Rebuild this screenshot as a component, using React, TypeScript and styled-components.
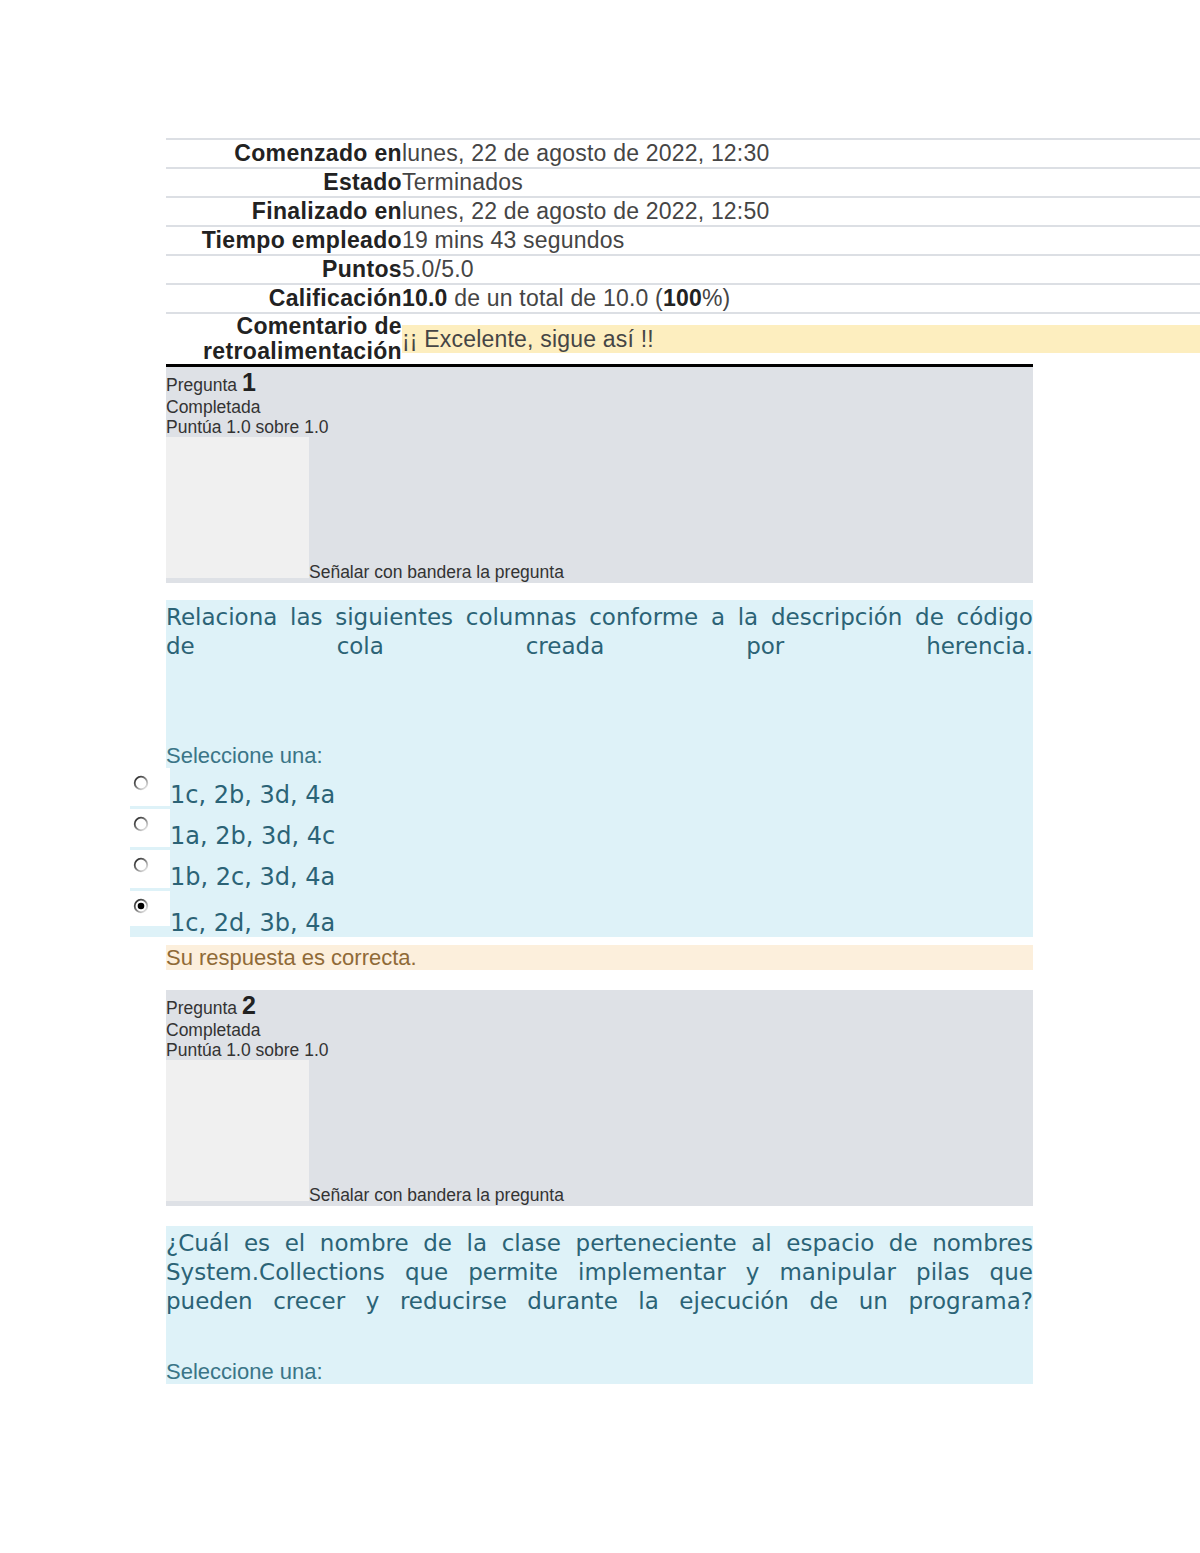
import React from "react";
import styled, { createGlobalStyle } from "styled-components";

const GlobalStyle = createGlobalStyle`
  html, body {
    margin: 0;
    padding: 0;
    background: #fff;
  }
  body {
    font-family: "Liberation Sans", Arial, sans-serif;
  }
`;

const Page = styled.div`
  box-sizing: border-box;
  width: 1200px;
  min-height: 1553px;
  padding: 138px 0 0 166px;
  overflow: hidden;
`;

const Summary = styled.div`
  display: flex;
  flex-direction: column;
`;

const SummaryRow = styled.div`
  display: grid;
  grid-template-columns: 236px 1fr;
  border-top: 2px solid #dcdfe4;
`;

const Label = styled.div<{ $tall?: boolean }>`
  text-align: right;
  font-size: 23px;
  font-weight: 700;
  letter-spacing: 0.35px;
  line-height: ${(p) => (p.$tall ? "25px" : "27px")};
  color: #222;
  white-space: nowrap;
`;

const Value = styled.div`
  font-size: 23px;
  line-height: 27px;
  letter-spacing: 0.2px;
  color: #454545;
  white-space: nowrap;
  align-self: center;

  b {
    color: #222;
  }
`;

const Feedback = styled(Value)`
  background: #fdeebf;
  line-height: 28px;
`;

const InfoBox = styled.div<{ $ruled?: boolean }>`
  width: 867px;
  background: #dee1e6;
  border-top: ${(p) => (p.$ruled ? "3px solid #000" : "none")};
  padding: 2px 0 5px;
  color: #333;
  font-size: 17.5px;
`;

const InfoLine = styled.div<{ $h: number }>`
  line-height: ${(p) => p.$h}px;
  height: ${(p) => p.$h}px;
`;

const QNum = styled.span`
  font-size: 25px;
  font-weight: 700;
  color: #222;
`;

const FlagRow = styled.div`
  display: flex;
  align-items: flex-end;
  height: 141px;
`;

const FlagCell = styled.div`
  width: 143px;
  align-self: stretch;
  background: #f0f0f0;
`;

const FlagText = styled.div`
  line-height: 18px;
  margin-bottom: -3px;
`;

const QuestionBox = styled.div<{ $gap: number }>`
  width: 867px;
  margin-top: ${(p) => p.$gap}px;
  background: #def2f8;
  padding-top: 3px;
`;

const TextLine = styled.div`
  display: flex;
  justify-content: space-between;
  font-family: "DejaVu Sans", Verdana, sans-serif;
  font-size: 23px;
  line-height: 29px;
  color: #2b6376;
  white-space: nowrap;
`;

const Prompt = styled.div<{ $space: number }>`
  margin-top: ${(p) => p.$space}px;
  font-size: 22px;
  line-height: 24px;
  color: #3a7587;
`;

const Options = styled.div`
  margin-left: -36px;
  width: 903px;
`;

const OptionRow = styled.div`
  display: grid;
  grid-template-columns: 40px 1fr;
  background: #def2f8;
`;

const RadioCell = styled.div<{ $last?: boolean }>`
  background: #fff;
  margin-bottom: ${(p) => (p.$last ? "11px" : "3px")};
  padding: 7px 0 0 3px;
  line-height: 0;
`;

const OptionLabel = styled.div<{ $last?: boolean }>`
  padding-top: ${(p) => (p.$last ? "18px" : "13px")};
  font-family: "DejaVu Sans", Verdana, sans-serif;
  font-size: 24px;
  line-height: 28px;
  color: #2b6376;
`;

const Result = styled.div`
  width: 867px;
  margin-top: 8px;
  background: #fcefdc;
  font-size: 22px;
  line-height: 25px;
  color: #8f6a37;
`;

const Spacer = styled.div<{ $h: number }>`
  height: ${(p) => p.$h}px;
`;

const Radio = ({ checked }: { checked?: boolean }) => (
  <svg width="16" height="16" viewBox="0 0 16 16">
    <defs>
      <linearGradient id="radioEdge" x1="0.1" y1="0.1" x2="0.9" y2="0.9">
        <stop offset="0" stopColor="#2e2e2e" />
        <stop offset="0.55" stopColor="#8a8a8a" />
        <stop offset="1" stopColor="#e6e6e6" />
      </linearGradient>
    </defs>
    <circle cx="8" cy="8" r="6.3" fill="#fff" stroke="url(#radioEdge)" strokeWidth="1.8" />
    {checked && <circle cx="8" cy="8" r="3.3" fill="#000" />}
  </svg>
);

const Justified = ({ text }: { text: string }) => (
  <TextLine>
    {text.split(" ").map((w, i) => (
      <span key={i}>{w}</span>
    ))}
  </TextLine>
);

const summary = [
  { label: "Comenzado en", value: "lunes, 22 de agosto de 2022, 12:30" },
  { label: "Estado", value: "Terminados" },
  { label: "Finalizado en", value: "lunes, 22 de agosto de 2022, 12:50" },
  { label: "Tiempo empleado", value: "19 mins 43 segundos" },
  { label: "Puntos", value: "5.0/5.0" },
];

const QuestionInfo = ({ n, ruled }: { n: number; ruled?: boolean }) => (
  <InfoBox $ruled={ruled}>
    <InfoLine $h={27}>
      Pregunta <QNum>{n}</QNum>
    </InfoLine>
    <InfoLine $h={22}>Completada</InfoLine>
    <InfoLine $h={19}>Puntúa 1.0 sobre 1.0</InfoLine>
    <FlagRow>
      <FlagCell />
      <FlagText>Señalar con bandera la pregunta</FlagText>
    </FlagRow>
  </InfoBox>
);

const answers = ["1c, 2b, 3d, 4a", "1a, 2b, 3d, 4c", "1b, 2c, 3d, 4a", "1c, 2d, 3b, 4a"];

export default function App() {
  return (
    <>
      <GlobalStyle />
      <Page>
        <Summary>
          {summary.map((r) => (
            <SummaryRow key={r.label}>
              <Label>{r.label}</Label>
              <Value>{r.value}</Value>
            </SummaryRow>
          ))}
          <SummaryRow>
            <Label>Calificación</Label>
            <Value>
              <b>10.0</b> de un total de 10.0 (<b>100</b>%)
            </Value>
          </SummaryRow>
          <SummaryRow>
            <Label $tall>
              Comentario de
              <br />
              retroalimentación
            </Label>
            <Feedback>¡¡ Excelente, sigue así !!</Feedback>
          </SummaryRow>
        </Summary>

        <QuestionInfo n={1} ruled />
        <QuestionBox $gap={17}>
          <Justified text="Relaciona las siguientes columnas conforme a la descripción de código" />
          <Justified text="de cola creada por herencia." />
          <Prompt $space={83}>Seleccione una:</Prompt>
          <Options>
            {answers.map((a, i) => {
              const last = i === answers.length - 1;
              return (
                <OptionRow key={a}>
                  <RadioCell $last={last}>
                    <Radio checked={last} />
                  </RadioCell>
                  <OptionLabel $last={last}>{a}</OptionLabel>
                </OptionRow>
              );
            })}
          </Options>
        </QuestionBox>
        <Result>Su respuesta es correcta.</Result>

        <Spacer $h={20} />
        <QuestionInfo n={2} />
        <QuestionBox $gap={20}>
          <Justified text="¿Cuál es el nombre de la clase perteneciente al espacio de nombres" />
          <Justified text="System.Collections que permite implementar y manipular pilas que" />
          <Justified text="pueden crecer y reducirse durante la ejecución de un programa?" />
          <Prompt $space={44}>Seleccione una:</Prompt>
        </QuestionBox>
      </Page>
    </>
  );
}
